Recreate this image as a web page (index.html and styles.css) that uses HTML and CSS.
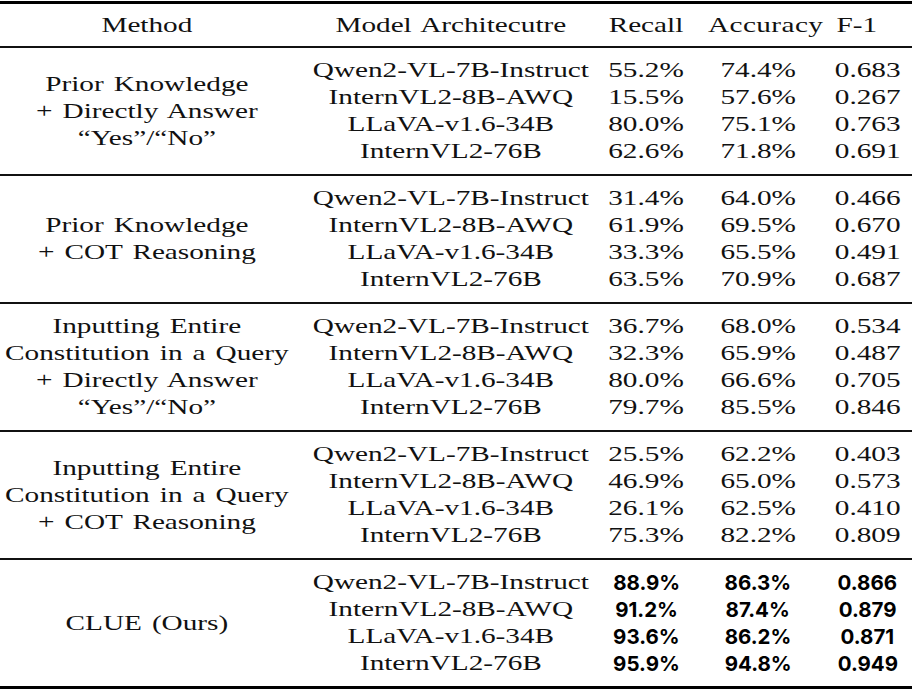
FILE: index.html
```html
<!DOCTYPE html>
<html>
<head>
<meta charset="utf-8">
<link rel="stylesheet" href="styles.css">
</head>
<body>
<div class="table">
  <div class="head">
    <div>Method</div>
    <div>Model Architecutre</div>
    <div>Recall</div>
    <div class="h-acc">Accuracy</div>
    <div class="h-f1">F-1</div>
  </div>

  <div class="group">
    <div class="method">Prior Knowledge<br>+ Directly Answer<br>“Yes”/“No”</div>
    <div class="c">Qwen2-VL-7B-Instruct</div><div class="c">55.2%</div><div class="c">74.4%</div><div class="c">0.683</div>
    <div class="c">InternVL2-8B-AWQ</div><div class="c">15.5%</div><div class="c">57.6%</div><div class="c">0.267</div>
    <div class="c">LLaVA-v1.6-34B</div><div class="c">80.0%</div><div class="c">75.1%</div><div class="c">0.763</div>
    <div class="c">InternVL2-76B</div><div class="c">62.6%</div><div class="c">71.8%</div><div class="c">0.691</div>
  </div>

  <div class="group">
    <div class="method">Prior Knowledge<br>+ COT Reasoning</div>
    <div class="c">Qwen2-VL-7B-Instruct</div><div class="c">31.4%</div><div class="c">64.0%</div><div class="c">0.466</div>
    <div class="c">InternVL2-8B-AWQ</div><div class="c">61.9%</div><div class="c">69.5%</div><div class="c">0.670</div>
    <div class="c">LLaVA-v1.6-34B</div><div class="c">33.3%</div><div class="c">65.5%</div><div class="c">0.491</div>
    <div class="c">InternVL2-76B</div><div class="c">63.5%</div><div class="c">70.9%</div><div class="c">0.687</div>
  </div>

  <div class="group">
    <div class="method">Inputting Entire<br>Constitution in a Query<br>+ Directly Answer<br>“Yes”/“No”</div>
    <div class="c">Qwen2-VL-7B-Instruct</div><div class="c">36.7%</div><div class="c">68.0%</div><div class="c">0.534</div>
    <div class="c">InternVL2-8B-AWQ</div><div class="c">32.3%</div><div class="c">65.9%</div><div class="c">0.487</div>
    <div class="c">LLaVA-v1.6-34B</div><div class="c">80.0%</div><div class="c">66.6%</div><div class="c">0.705</div>
    <div class="c">InternVL2-76B</div><div class="c">79.7%</div><div class="c">85.5%</div><div class="c">0.846</div>
  </div>

  <div class="group">
    <div class="method">Inputting Entire<br>Constitution in a Query<br>+ COT Reasoning</div>
    <div class="c">Qwen2-VL-7B-Instruct</div><div class="c">25.5%</div><div class="c">62.2%</div><div class="c">0.403</div>
    <div class="c">InternVL2-8B-AWQ</div><div class="c">46.9%</div><div class="c">65.0%</div><div class="c">0.573</div>
    <div class="c">LLaVA-v1.6-34B</div><div class="c">26.1%</div><div class="c">62.5%</div><div class="c">0.410</div>
    <div class="c">InternVL2-76B</div><div class="c">75.3%</div><div class="c">82.2%</div><div class="c">0.809</div>
  </div>

  <div class="group">
    <div class="method">CLUE (Ours)</div>
    <div class="c">Qwen2-VL-7B-Instruct</div><div class="c"><span class="b">88.9%</span></div><div class="c"><span class="b">86.3%</span></div><div class="c"><span class="b">0.866</span></div>
    <div class="c">InternVL2-8B-AWQ</div><div class="c"><span class="b">91.2%</span></div><div class="c"><span class="b">87.4%</span></div><div class="c"><span class="b">0.879</span></div>
    <div class="c">LLaVA-v1.6-34B</div><div class="c"><span class="b">93.6%</span></div><div class="c"><span class="b">86.2%</span></div><div class="c"><span class="b">0.871</span></div>
    <div class="c">InternVL2-76B</div><div class="c"><span class="b">95.9%</span></div><div class="c"><span class="b">94.8%</span></div><div class="c"><span class="b">0.949</span></div>
  </div>
</div>
</body>
</html>
```

FILE: styles.css
```css
html, body {
  margin: 0;
  padding: 0;
  background: #ffffff;
}

.table {
  width: 670.6px;
  margin-top: 1px;
  transform: scaleX(1.36);
  transform-origin: 0 0;
  font-family: "Liberation Serif", "Times New Roman", serif;
  font-size: 21.5px;
  word-spacing: 2px;
  color: #111;
  border-top: 3px solid #000;
  border-bottom: 3px solid #000;
}

.head {
  display: grid;
  grid-template-columns: 216px 231px 56px 109px 52px;
  height: 42px;
  align-items: center;
  border-bottom: 2px solid #111;
}

.head > div {
  text-align: center;
  white-space: nowrap;
}

.head .h-acc {
  padding-left: 11px;
  letter-spacing: 0.3px;
}

.head .h-f1 {
  padding-right: 16px;
}

.group {
  display: grid;
  grid-template-columns: 216px 231px 56px 109px 52px;
  grid-auto-rows: 27px;
  line-height: 27px;
  padding: 9px 0;
  border-bottom: 2px solid #111;
}

.group:last-child {
  border-bottom: 0;
}

.method {
  grid-column: 1;
  grid-row: 1 / span 4;
  display: flex;
  flex-direction: column;
  justify-content: center;
  align-items: center;
  text-align: center;
  white-space: nowrap;
}

.c {
  display: flex;
  justify-content: center;
  white-space: nowrap;
}

.b {
  display: inline-block;
  font-family: Inter, "Liberation Sans", sans-serif;
  font-weight: 700;
  font-size: 20.5px;
  color: #000;
  transform: scaleX(0.7353);
}
```
